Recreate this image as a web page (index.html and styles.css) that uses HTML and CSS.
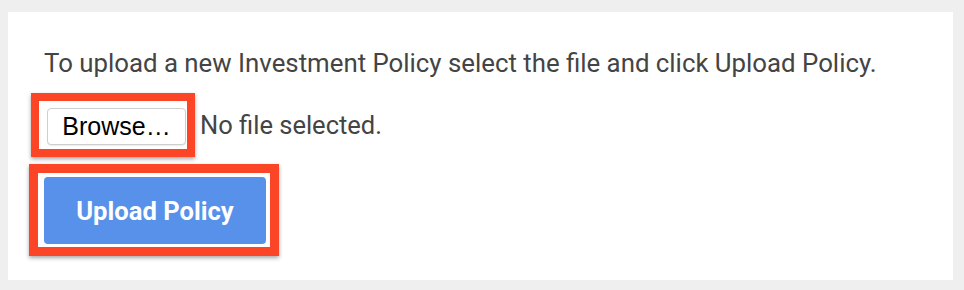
FILE: index.html
```html
<!DOCTYPE html>
<html>
<head>
<meta charset="utf-8">
<link rel="stylesheet" href="styles.css">
</head>
<body>
<div class="panel">
  <p class="intro">To upload a new Investment Policy select the file and click Upload Policy.</p>
  <div class="file-row">
    <span class="mark mark-browse"><button class="browse" type="button">Browse…</button></span>
    <span class="file-status">No file selected.</span>
  </div>
  <div class="upload-row">
    <span class="mark mark-upload"><button class="upload" type="button">Upload Policy</button></span>
  </div>
</div>
</body>
</html>
```

FILE: styles.css
```css
html, body {
  margin: 0;
  padding: 0;
  background: #efefef;
}
body {
  width: 964px;
  height: 290px;
  overflow: hidden;
}
.panel {
  margin: 12px 11px 10px 8px;
  height: 268px;
  box-sizing: border-box;
  background: #fff;
  padding: 36px 0 0 36px;
  font-family: Roboto, "Liberation Sans", sans-serif;
  color: #444;
}
.intro {
  margin: 0;
  font-size: 25.8px;
  line-height: 30px;
}
.file-row {
  margin-top: 15px;
  display: flex;
  align-items: center;
}
.mark {
  display: inline-flex;
  box-sizing: border-box;
  border-style: solid;
  border-color: #fc4526;
  box-shadow: 0 2px 4px rgba(0, 0, 0, 0.35);
}
.mark-browse {
  margin-left: -13px;
  width: 164px;
  height: 64px;
  border-width: 8px;
  padding: 7px 1px 4px 8px;
}
.browse {
  width: 139px;
  height: 37px;
  margin: 0;
  padding: 0;
  background: #fff;
  border: 1px solid #cfcfcf;
  border-radius: 4px;
  box-shadow: 0 1px 1px rgba(0, 0, 0, 0.08);
  font-family: "Liberation Sans", Arial, sans-serif;
  font-size: 25px;
  color: #000;
}
.file-status {
  margin-left: 5px;
  font-size: 25.5px;
  color: #444;
}
.upload-row {
  margin-top: 7px;
  display: flex;
}
.mark-upload {
  margin-left: -15px;
  width: 250px;
  height: 92px;
  border-width: 9px;
  padding: 4px 4px 3px 6px;
}
.upload {
  width: 222px;
  height: 67px;
  margin: 0;
  padding: 0;
  background: #5891e9;
  border: none;
  border-radius: 4px;
  font-family: Roboto, "Liberation Sans", sans-serif;
  font-weight: 700;
  font-size: 25.6px;
  color: #fff;
}
```
